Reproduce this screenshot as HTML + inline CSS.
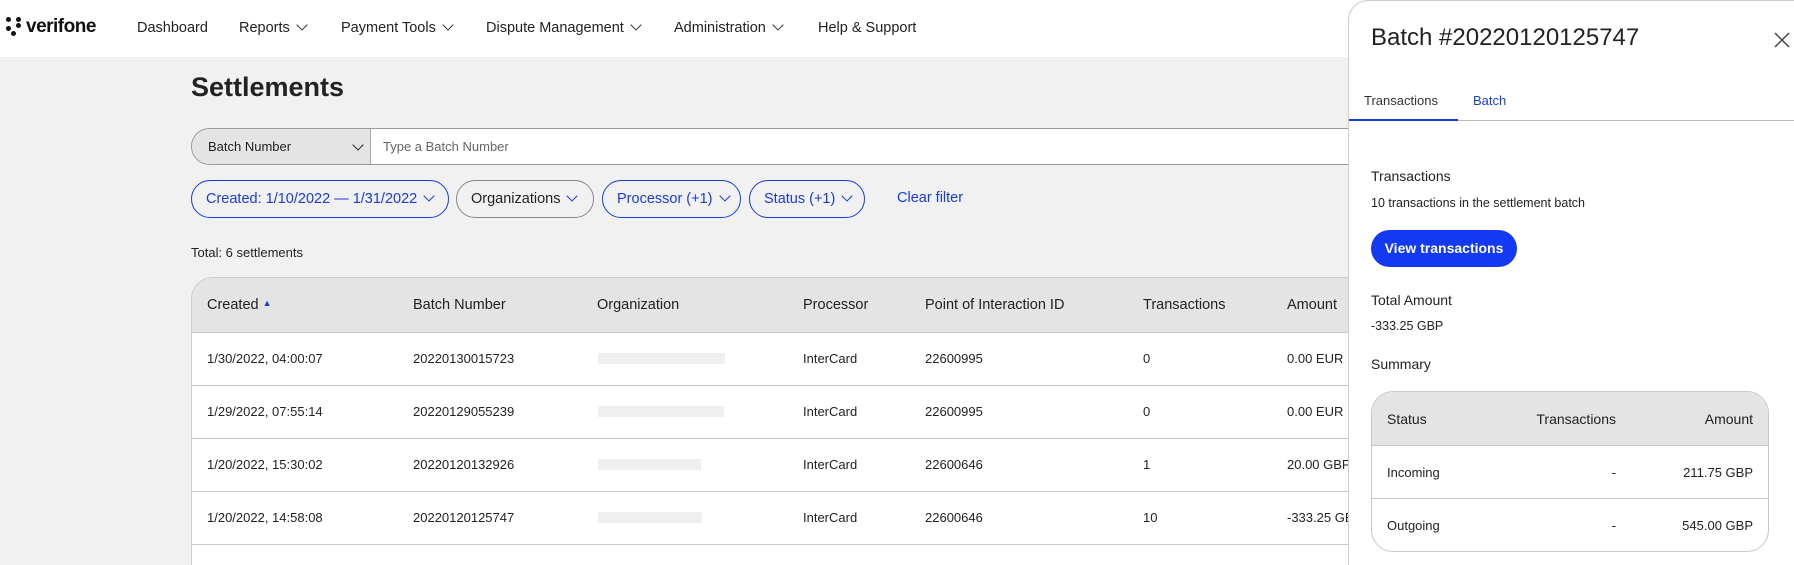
<!DOCTYPE html>
<html><head><meta charset="utf-8"><style>
*{box-sizing:border-box;margin:0;padding:0}
html{width:1794px;height:565px;overflow:hidden}
body{width:1794px;height:565px;overflow:hidden;background:#f1f1f1;font-family:"Liberation Sans",sans-serif;color:#222;position:relative}
.hdr{position:absolute;left:0;top:0;width:1794px;height:57px;background:#fff}
.nav{position:absolute;top:20px;font-size:14.5px;color:#222;white-space:nowrap}
.chev{display:inline-block;width:8px;height:8px;border-right:1.5px solid #333;border-bottom:1.5px solid #333;transform:rotate(45deg);margin-left:8px;position:relative;top:-3px}
.abs{position:absolute;white-space:nowrap}
.pill{position:absolute;top:180px;height:38px;border-radius:19px;border:1px solid #1a3cd8;color:#1a3cd8;font-size:14.5px;padding:0 14px;line-height:36px;white-space:nowrap}
.pill .chev{border-color:#1a3cd8}
.tbl{position:absolute;left:191px;top:277px;width:1250px;height:300px;background:#fff;border:1px solid #ccc;border-bottom:none;border-radius:22px 0 0 0;overflow:hidden}
.th{position:absolute;left:0;top:0;width:100%;height:55px;background:#e4e4e4;border-bottom:1px solid #c8c8c8}
.row{position:absolute;left:0;width:100%;border-bottom:1px solid #c8c8c8;height:53px}
.c{position:absolute;font-size:13px;white-space:nowrap}
.bar{position:absolute;height:11px;background:#efefef}
.panel{position:absolute;left:1348px;top:0;width:460px;height:580px;background:#fff;border:1px solid #ccc;border-radius:20px 0 0 0}
</style></head><body>
<div class="hdr">
 <div class="abs" style="left:4px;top:17px;width:22px;height:20px">
  <span style="position:absolute;left:2px;top:0;width:5px;height:5px;border-radius:50%;background:#111"></span>
  <span style="position:absolute;left:12px;top:0;width:5px;height:5px;border-radius:50%;background:#111"></span>
  <span style="position:absolute;left:2px;top:9px;width:5px;height:5px;border-radius:50%;background:#111"></span>
  <span style="position:absolute;left:12px;top:6px;width:5px;height:5px;border-radius:50%;background:#111"></span>
  <span style="position:absolute;left:7px;top:14px;width:5px;height:5px;border-radius:50%;background:#111"></span>
 </div>
 <div class="abs" style="left:26px;top:16px;font-size:19px;font-weight:bold;letter-spacing:-0.5px;color:#111">verifone</div>
 <div class="nav" style="left:137px">Dashboard</div>
 <div class="nav" style="left:239px">Reports<span class="chev"></span></div>
 <div class="nav" style="left:341px">Payment Tools<span class="chev"></span></div>
 <div class="nav" style="left:486px">Dispute Management<span class="chev"></span></div>
 <div class="nav" style="left:674px">Administration<span class="chev"></span></div>
 <div class="nav" style="left:818px">Help &amp; Support</div>
</div>
<div class="abs" style="left:191px;top:72px;font-size:27px;font-weight:bold;color:#222">Settlements</div>
<div class="abs" style="left:191px;top:128px;width:1200px;height:37px;background:#fff;border:1px solid #999;border-radius:19px 0 0 19px;overflow:hidden">
 <div style="position:absolute;left:0;top:0;width:179px;height:100%;background:#e4e4e4;border-right:1px solid #aaa"></div>
 <div class="abs" style="left:16px;top:10px;font-size:13px">Batch Number</div>
 <span class="chev" style="position:absolute;left:154px;top:12px;border-color:#222"></span>
 <div class="abs" style="left:191px;top:10px;font-size:13px;color:#666">Type a Batch Number</div>
</div>
<div class="pill" style="left:191px;width:258px">Created: 1/10/2022 — 1/31/2022<span class="chev"></span></div>
<div class="pill" style="left:456px;width:138px;border-color:#888;color:#222">Organizations<span class="chev"></span></div>
<div class="pill" style="left:602px;width:139px">Processor (+1)<span class="chev"></span></div>
<div class="pill" style="left:749px;width:116px">Status (+1)<span class="chev"></span></div>
<div class="abs" style="left:897px;top:190px;font-size:14.5px;color:#1a3cd8">Clear filter</div>
<div class="abs" style="left:191px;top:245px;font-size:13px">Total: 6 settlements</div>
<div class="tbl">
 <div class="th">
  <div class="c" style="left:15px;top:19px;font-size:14.5px">Created <span style="color:#1a3cd8;font-size:9px;position:relative;top:-3px">▲</span></div>
  <div class="c" style="left:221px;top:19px;font-size:14.5px">Batch Number</div>
  <div class="c" style="left:405px;top:19px;font-size:14.5px">Organization</div>
  <div class="c" style="left:611px;top:19px;font-size:14.5px">Processor</div>
  <div class="c" style="left:733px;top:19px;font-size:14.5px">Point of Interaction ID</div>
  <div class="c" style="left:951px;top:19px;font-size:14.5px">Transactions</div>
  <div class="c" style="left:1095px;top:19px;font-size:14.5px">Amount</div>
 </div>
 <div class="row" style="top:55px"><div class="c" style="left:15px;top:18px">1/30/2022, 04:00:07</div><div class="c" style="left:221px;top:18px">20220130015723</div><div class="bar" style="left:406px;top:20px;width:127px"></div><div class="c" style="left:611px;top:18px">InterCard</div><div class="c" style="left:733px;top:18px">22600995</div><div class="c" style="left:951px;top:18px">0</div><div class="c" style="left:1095px;top:18px">0.00 EUR</div></div>
 <div class="row" style="top:108px"><div class="c" style="left:15px;top:18px">1/29/2022, 07:55:14</div><div class="c" style="left:221px;top:18px">20220129055239</div><div class="bar" style="left:406px;top:20px;width:126px"></div><div class="c" style="left:611px;top:18px">InterCard</div><div class="c" style="left:733px;top:18px">22600995</div><div class="c" style="left:951px;top:18px">0</div><div class="c" style="left:1095px;top:18px">0.00 EUR</div></div>
 <div class="row" style="top:161px"><div class="c" style="left:15px;top:18px">1/20/2022, 15:30:02</div><div class="c" style="left:221px;top:18px">20220120132926</div><div class="bar" style="left:406px;top:20px;width:103px"></div><div class="c" style="left:611px;top:18px">InterCard</div><div class="c" style="left:733px;top:18px">22600646</div><div class="c" style="left:951px;top:18px">1</div><div class="c" style="left:1095px;top:18px">20.00 GBP</div></div>
 <div class="row" style="top:214px"><div class="c" style="left:15px;top:18px">1/20/2022, 14:58:08</div><div class="c" style="left:221px;top:18px">20220120125747</div><div class="bar" style="left:406px;top:20px;width:104px"></div><div class="c" style="left:611px;top:18px">InterCard</div><div class="c" style="left:733px;top:18px">22600646</div><div class="c" style="left:951px;top:18px">10</div><div class="c" style="left:1095px;top:18px">-333.25 GBP</div></div>
</div>
<div class="panel">
 <div class="abs" style="left:22px;top:23px;font-size:24px;color:#222">Batch #20220120125747</div>
 <svg class="abs" style="left:425px;top:31px" width="16" height="16" viewBox="0 0 16 16"><path d="M1 1L15 15M15 1L1 15" stroke="#444" stroke-width="1.5"/></svg>
 <div class="abs" style="left:15px;top:92px;font-size:13px;color:#333">Transactions</div>
 <div class="abs" style="left:124px;top:92px;font-size:13px;color:#1a3cd8">Batch</div>
 <div class="abs" style="left:0;top:119px;width:460px;height:1px;background:#bbb"></div>
 <div class="abs" style="left:0;top:118px;width:109px;height:2px;background:#1a3cd8"></div>
 <div class="abs" style="left:22px;top:167px;font-size:14px">Transactions</div>
 <div class="abs" style="left:22px;top:195px;font-size:12.5px">10 transactions in the settlement batch</div>
 <div class="abs" style="left:22px;top:229px;width:146px;height:37px;border-radius:19px;background:#1439f5;color:#fff;font-weight:bold;font-size:14px;text-align:center;line-height:37px">View transactions</div>
 <div class="abs" style="left:22px;top:291px;font-size:14px">Total Amount</div>
 <div class="abs" style="left:22px;top:318px;font-size:12.5px">-333.25 GBP</div>
 <div class="abs" style="left:22px;top:355px;font-size:14px">Summary</div>
 <div class="abs" style="left:22px;top:390px;width:398px;height:161px;border:1px solid #c8c8c8;border-radius:22px;overflow:hidden;background:#fff">
  <div style="position:absolute;left:0;top:0;width:100%;height:54px;background:#e4e4e4;border-bottom:1px solid #c8c8c8"></div>
  <div style="position:absolute;left:0;top:106px;width:100%;height:1px;background:#c8c8c8"></div>
  <div class="c" style="left:15px;top:19px;font-size:14px">Status</div>
  <div class="c" style="right:152px;top:19px;font-size:14px">Transactions</div>
  <div class="c" style="right:15px;top:19px;font-size:14px">Amount</div>
  <div class="c" style="left:15px;top:73px">Incoming</div>
  <div class="c" style="right:152px;top:73px">-</div>
  <div class="c" style="right:15px;top:73px">211.75 GBP</div>
  <div class="c" style="left:15px;top:126px">Outgoing</div>
  <div class="c" style="right:152px;top:126px">-</div>
  <div class="c" style="right:15px;top:126px">545.00 GBP</div>
 </div>
</div>
</body></html>
